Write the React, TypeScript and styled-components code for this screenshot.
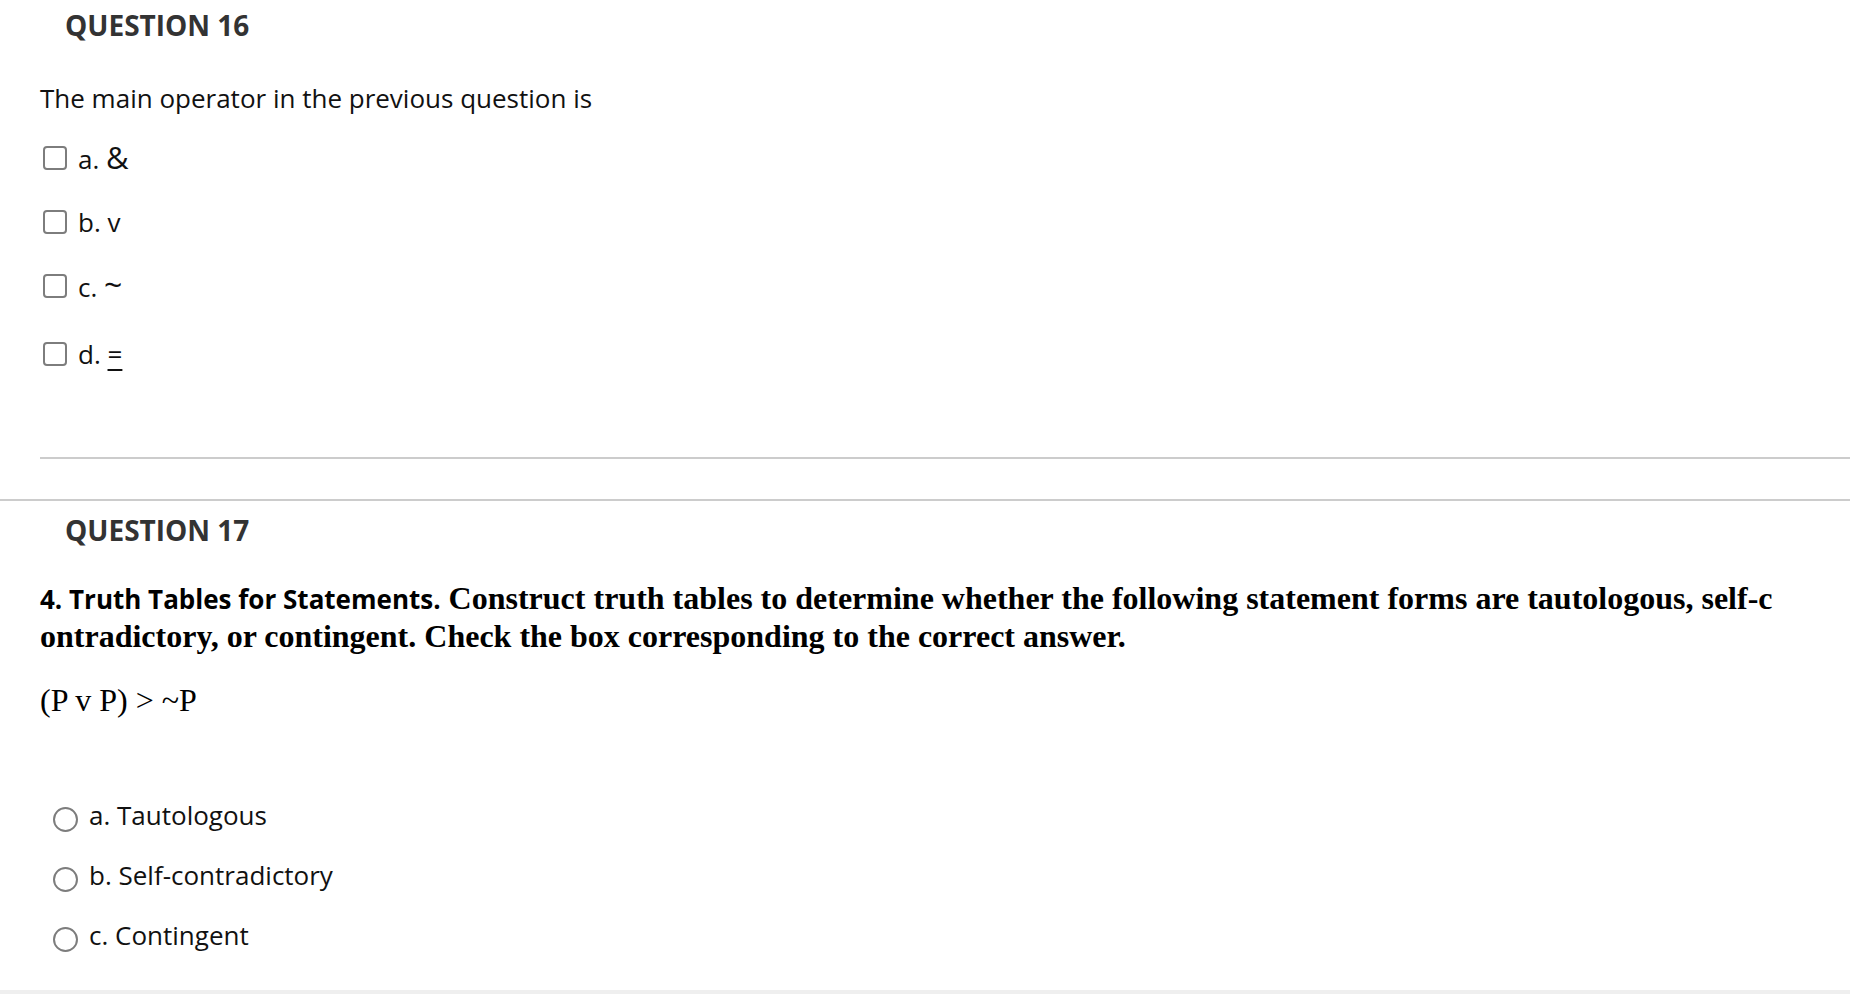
import styled, { createGlobalStyle } from "styled-components";

const GlobalStyle = createGlobalStyle`
  html, body {
    margin: 0;
    padding: 0;
    background: #ffffff;
  }
  body {
    font-family: "Open Sans", "Liberation Sans", sans-serif;
    color: #111111;
  }
`;

const checkOptions = [
    { key: "a", label: "a.", value: "&", size: 31 },
    { key: "b", label: "b.", value: "v", size: 26 },
    { key: "c", label: "c.", value: "~", size: 32 },
    { key: "d", label: "d.", value: "=", size: 26, underline: true },
];

const radioOptions = ["a. Tautologous", "b. Self-contradictory", "c. Contingent"];

export default function App() {
    return (
        <>
            <GlobalStyle/>
            <SPage>
                <SQuestion>
                    <STitle>QUESTION 16</STitle>
                    <SBody>
                        <SPrompt>The main operator in the previous question is</SPrompt>
                        <SChecks>
                            {checkOptions.map((o) => (
                                <SOption key={o.key} $extra={o.underline ? 4 : 0}>
                                    <SCheckbox/>
                                    <SLabel>
                                        {o.label}{" "}
                                        <SSymbol $size={o.size} $underline={o.underline}>{o.value}</SSymbol>
                                    </SLabel>
                                </SOption>
                            ))}
                        </SChecks>
                        <SDivider/>
                    </SBody>
                </SQuestion>
                <SQuestion $bordered>
                    <STitle>QUESTION 17</STitle>
                    <SBody>
                        <SStatement>
                            <SSansBold>4. Truth Tables for Statements.</SSansBold> Construct truth tables to determine whether the following statement forms are tautologous, self-c<br/>ontradictory, or contingent. Check the box corresponding to the correct answer.
                        </SStatement>
                        <SFormula>(P v P) &gt; ~P</SFormula>
                        <SRadios>
                            {radioOptions.map((r) => (
                                <SRadioRow key={r}>
                                    <SRadio/>
                                    <SLabel>{r}</SLabel>
                                </SRadioRow>
                            ))}
                        </SRadios>
                    </SBody>
                </SQuestion>
                <SFooterEdge/>
            </SPage>
        </>
    )
}

const SPage = styled.div`
  display: flex;
  flex-direction: column;
  min-height: 994px;
  overflow: hidden;
`;

const SQuestion = styled.section<{ $bordered?: boolean }>`
  display: flex;
  flex-direction: column;
  border-top: ${(p) => (p.$bordered ? "2px solid #cccccc" : "none")};
  padding-top: ${(p) => (p.$bordered ? "11px" : "7px")};
`;

const STitle = styled.h3`
  margin: 0 0 0 65px;
  font-family: "Open Sans", "Liberation Sans", sans-serif;
  font-size: 28px;
  line-height: 36px;
  font-weight: 700;
  color: #333333;
`;

const SBody = styled.div`
  display: flex;
  flex-direction: column;
  padding-left: 40px;
`;

const SPrompt = styled.p`
  margin: 37px 0 0;
  font-size: 26px;
  line-height: 36px;
  color: #111111;
`;

const SChecks = styled.ul`
  list-style: none;
  margin: 24px 0 0;
  padding: 0;
  display: flex;
  flex-direction: column;
  gap: 28px;
`;

const SOption = styled.li<{ $extra: number }>`
  display: flex;
  align-items: center;
  gap: 11px;
  height: 36px;
  padding-left: 3px;
  margin-top: ${(p) => p.$extra}px;
`;

const SCheckbox = styled.span`
  box-sizing: border-box;
  width: 24px;
  height: 24px;
  border: 2px solid #7d7d7d;
  border-radius: 4px;
  background: #ffffff;
  flex-shrink: 0;
`;

const SLabel = styled.span`
  font-family: "Open Sans", "Liberation Sans", sans-serif;
  font-size: 26px;
  line-height: 36px;
  color: #111111;
  white-space: nowrap;
`;

const SSymbol = styled.span<{ $size: number; $underline?: boolean }>`
  font-size: ${(p) => p.$size}px;
  text-decoration: ${(p) => (p.$underline ? "underline" : "none")};
  text-decoration-thickness: 2px;
  text-underline-offset: 5px;
`;

const SDivider = styled.hr`
  margin: 85px 0 40px;
  border: none;
  border-top: 2px solid #cccccc;
  height: 0;
`;

const SStatement = styled.p`
  margin: 32px 0 0;
  font-family: "Liberation Serif", "Times New Roman", serif;
  font-size: 32px;
  font-weight: 700;
  line-height: 37px;
  color: #000000;
`;

const SSansBold = styled.span`
  font-family: "Open Sans", "Liberation Sans", sans-serif;
  font-size: 26px;
  font-weight: 700;
`;

const SFormula = styled.p`
  margin: 27px 0 0;
  font-family: "Liberation Serif", "Times New Roman", serif;
  font-size: 32px;
  line-height: 37px;
  color: #000000;
`;

const SRadios = styled.ul`
  list-style: none;
  margin: 78px 0 0;
  padding: 0 0 0 13px;
  display: flex;
  flex-direction: column;
  gap: 24px;
`;

const SRadioRow = styled.li`
  display: flex;
  align-items: flex-start;
  gap: 11px;
  height: 36px;
`;

const SRadio = styled.span`
  box-sizing: border-box;
  width: 25px;
  height: 25px;
  margin-top: 10px;
  border: 2px solid #7d7d7d;
  border-radius: 50%;
  background: #ffffff;
  flex-shrink: 0;
`;

const SFooterEdge = styled.div`
  margin-top: auto;
  height: 4px;
  background: #efefef;
`;
